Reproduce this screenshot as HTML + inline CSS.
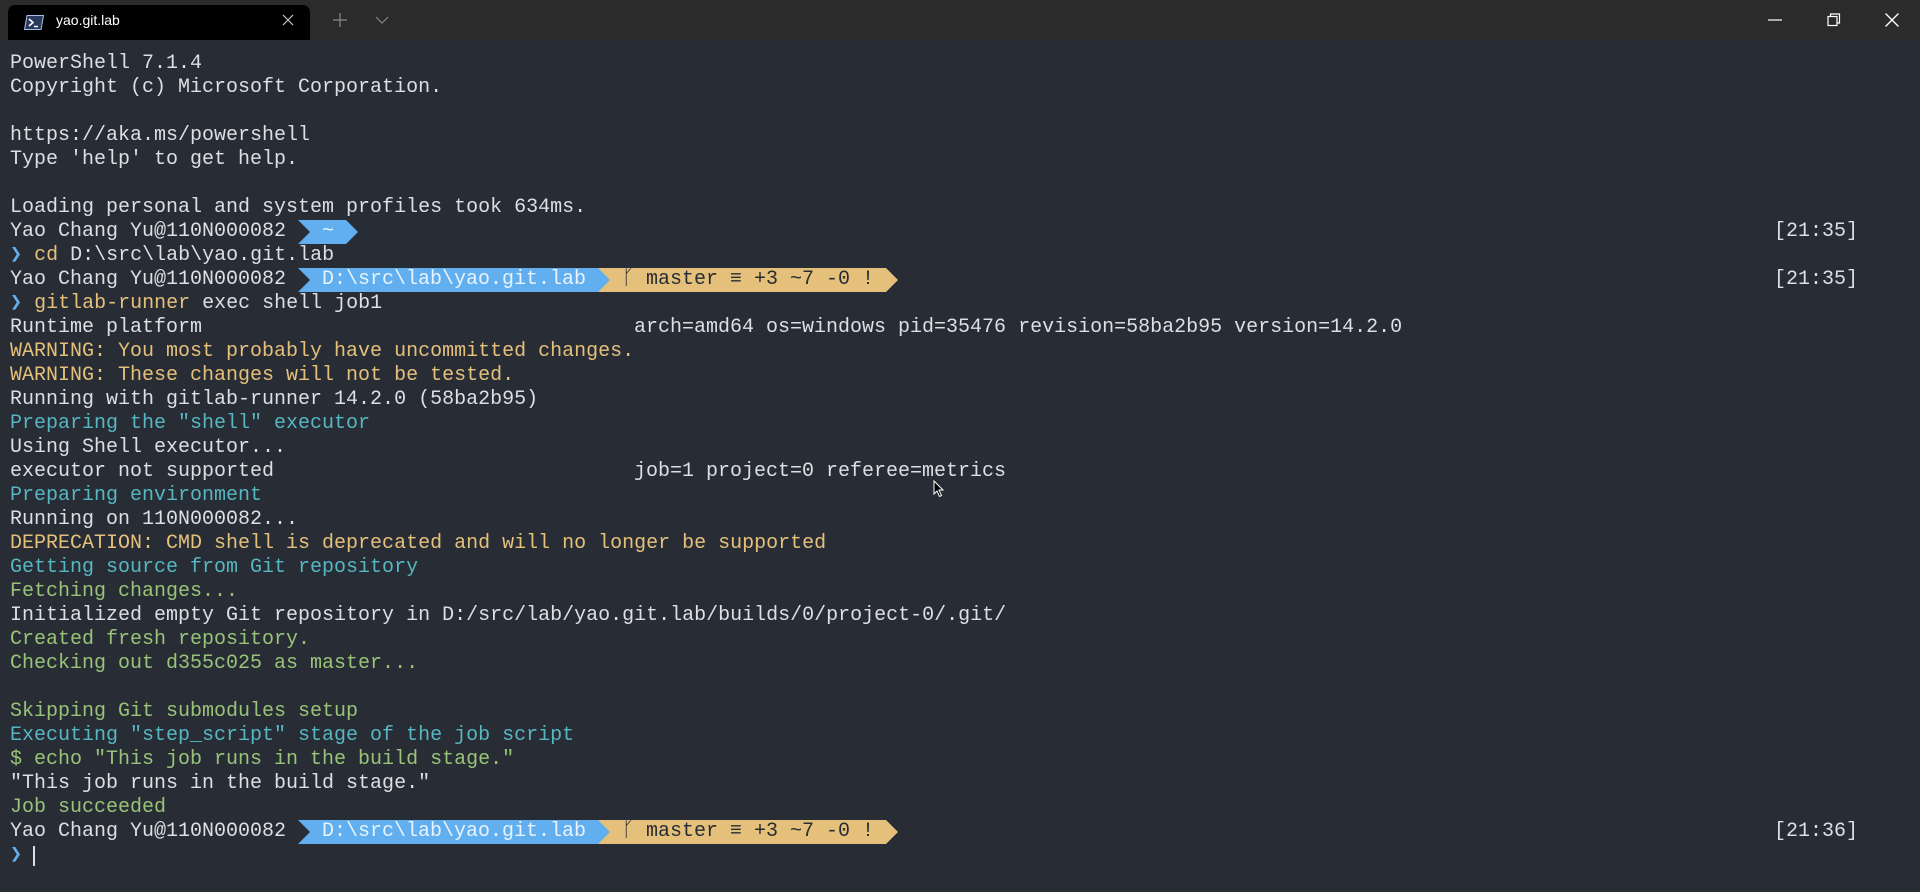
<!DOCTYPE html>
<html><head><meta charset="utf-8"><style>
html,body{margin:0;padding:0;width:1920px;height:892px;overflow:hidden;background:#282c34;}
#bar{position:absolute;left:0;top:0;width:1920px;height:40px;background:#2b2b2b;}
.term{position:absolute;left:0;top:52px;width:1920px;font:20px/24px "Liberation Mono","DejaVu Sans Mono",monospace;color:#dcdfe4;}
.l{position:relative;height:24px;white-space:pre;}
.l>span{position:absolute;top:0;}
.w{color:#dcdfe4}.y{color:#e5c07b}.c{color:#56b6c2}.g{color:#98c379}.b{color:#61afef}
.blue{position:absolute;top:0;height:24px;background:#61afef;color:#e8f3ff;z-index:2}
.yel{position:absolute;top:0;height:24px;background:#e5c07b;color:#282c34;z-index:1}
</style></head><body>
<div id="bar">
<svg style="position:absolute;left:0;top:0" width="420" height="40">
<path d="M8 40V13Q8 5 16 5H302Q310 5 310 13V40Z" fill="#000000"/>
<path d="M27 15.5H43.5L41 29.5H24.5Z" fill="#2a3a5a" stroke="#a8c0e8" stroke-width="1"/>
<path d="M29 19L33 22.5L29 26" stroke="#fff" stroke-width="1.6" fill="none"/>
<path d="M34 26.5H38" stroke="#fff" stroke-width="1.5"/>
<text x="56" y="25" font-family="Liberation Sans, sans-serif" font-size="14" fill="#ffffff">yao.git.lab</text>
<path d="M283 15L293 25M293 15L283 25" stroke="#ccc" stroke-width="1.2"/>
<path d="M340 13V27M333 20H347" stroke="#888" stroke-width="1.2"/>
<path d="M376 17L382 23L388 17" stroke="#888" stroke-width="1.2" fill="none"/>
</svg>
<svg style="position:absolute;left:1768px;top:19px" width="14" height="2"><path d="M0 1H14" stroke="#fff" stroke-width="1.2"/></svg>
<svg style="position:absolute;left:1827px;top:13px" width="14" height="14"><rect x="1" y="3.5" width="9" height="9" fill="none" stroke="#fff" stroke-width="1.2"/><path d="M3.5 3.5V1H12.5V10H10" fill="none" stroke="#fff" stroke-width="1.2"/></svg>
<svg style="position:absolute;left:1885px;top:13px" width="14" height="14"><path d="M0.5 0.5L13.5 13.5M13.5 0.5L0.5 13.5" stroke="#fff" stroke-width="1.3"/></svg>
</div>
<div class="term">
<div class="l"><span style="left:10px">PowerShell 7.1.4</span></div>
<div class="l"><span style="left:10px">Copyright (c) Microsoft Corporation.</span></div>
<div class="l"></div>
<div class="l"><span style="left:10px">https://aka.ms/powershell</span></div>
<div class="l"><span style="left:10px">Type 'help' to get help.</span></div>
<div class="l"></div>
<div class="l"><span style="left:10px">Loading personal and system profiles took 634ms.</span></div>
<div class="l"><span style="left:10px">Yao Chang Yu@110N000082</span><span class="blue" style="left:298px;width:60px;clip-path:polygon(0 0,48px 0,60px 12px,48px 24px,0 24px,12px 12px)"><span style="position:absolute;left:24px">~</span></span><span style="left:1774px">[21:35]</span></div>
<div class="l"><span style="left:10px"><span class="b">❯</span> <span class="y">cd</span> D:\src\lab\yao.git.lab</span></div>
<div class="l"><span style="left:10px">Yao Chang Yu@110N000082</span><span class="blue" style="left:298px;width:312px;clip-path:polygon(0 0,300px 0,312px 12px,300px 24px,0 24px,12px 12px)"><span style="position:absolute;left:24px">D:\src\lab\yao.git.lab</span></span><span class="yel" style="left:598px;width:300px;clip-path:polygon(0 0,288px 0,300px 12px,288px 24px,0 24px)"><span style="position:absolute;left:24px">ᚴ master ≡ +3 ~7 -0 !</span></span><span style="left:1774px">[21:35]</span></div>
<div class="l"><span style="left:10px"><span class="b">❯</span> <span class="y">gitlab-runner</span> exec shell job1</span></div>
<div class="l"><span style="left:10px">Runtime platform</span><span style="left:634px">arch=amd64 os=windows pid=35476 revision=58ba2b95 version=14.2.0</span></div>
<div class="l y"><span style="left:10px">WARNING: You most probably have uncommitted changes.</span></div>
<div class="l y"><span style="left:10px">WARNING: These changes will not be tested.</span></div>
<div class="l"><span style="left:10px">Running with gitlab-runner 14.2.0 (58ba2b95)</span></div>
<div class="l c"><span style="left:10px">Preparing the "shell" executor</span></div>
<div class="l"><span style="left:10px">Using Shell executor...</span></div>
<div class="l"><span style="left:10px">executor not supported</span><span style="left:634px">job=1 project=0 referee=metrics</span></div>
<div class="l c"><span style="left:10px">Preparing environment</span></div>
<div class="l"><span style="left:10px">Running on 110N000082...</span></div>
<div class="l y"><span style="left:10px">DEPRECATION: CMD shell is deprecated and will no longer be supported</span></div>
<div class="l c"><span style="left:10px">Getting source from Git repository</span></div>
<div class="l g"><span style="left:10px">Fetching changes...</span></div>
<div class="l"><span style="left:10px">Initialized empty Git repository in D:/src/lab/yao.git.lab/builds/0/project-0/.git/</span></div>
<div class="l g"><span style="left:10px">Created fresh repository.</span></div>
<div class="l g"><span style="left:10px">Checking out d355c025 as master...</span></div>
<div class="l"></div>
<div class="l g"><span style="left:10px">Skipping Git submodules setup</span></div>
<div class="l c"><span style="left:10px">Executing "step_script" stage of the job script</span></div>
<div class="l g"><span style="left:10px">$ echo "This job runs in the build stage."</span></div>
<div class="l"><span style="left:10px">"This job runs in the build stage."</span></div>
<div class="l g"><span style="left:10px">Job succeeded</span></div>
<div class="l"><span style="left:10px">Yao Chang Yu@110N000082</span><span class="blue" style="left:298px;width:312px;clip-path:polygon(0 0,300px 0,312px 12px,300px 24px,0 24px,12px 12px)"><span style="position:absolute;left:24px">D:\src\lab\yao.git.lab</span></span><span class="yel" style="left:598px;width:300px;clip-path:polygon(0 0,288px 0,300px 12px,288px 24px,0 24px)"><span style="position:absolute;left:24px">ᚴ master ≡ +3 ~7 -0 !</span></span><span style="left:1774px">[21:36]</span></div>
<div class="l"><span style="left:10px" class="b">❯</span><span style="left:33px;top:2px;width:2px;height:20px;background:#dcdfe4"></span></div>
</div>
<svg style="position:absolute;left:933px;top:480px" width="12" height="18" viewBox="0 0 12 18"><path d="M1 1V14L4 11L6.5 16.5L8.5 15.5L6 10H10Z" fill="#000" stroke="#fff" stroke-width="1"/></svg>
</body></html>
